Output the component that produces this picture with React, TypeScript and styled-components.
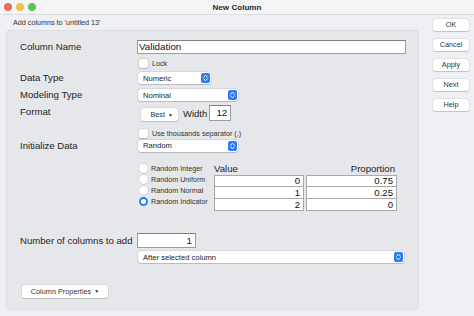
import React from "react";
import styled, { createGlobalStyle } from "styled-components";

const GlobalStyle = createGlobalStyle`
  html, body {
    margin: 0;
    padding: 0;
    background: #eef0f3;
    font-family: "Liberation Sans", Arial, sans-serif;
    color: #1e1e1e;
  }
`;

const Window = styled.div`
  width: 474px;
  height: 316px;
  display: flex;
  flex-direction: column;
  background: #eef0f3;
  overflow: hidden;
`;

const TitleBar = styled.div`
  height: 14px;
  display: flex;
  align-items: center;
  position: relative;
  background: #f3f4f6;
  border-bottom: 1px solid #dcdde0;
`;

const Lights = styled.div`
  display: flex;
  gap: 4px;
  padding-left: 4px;
`;

const Light = styled.span<{ $c: string }>`
  width: 8px;
  height: 8px;
  border-radius: 50%;
  background: ${(p) => p.$c};
`;

const Title = styled.div`
  position: absolute;
  left: 0;
  right: 0;
  text-align: center;
  font-size: 8.1px;
  font-weight: bold;
  color: #2a2a2a;
`;

const Body = styled.div`
  flex: 1;
  display: flex;
`;

const Main = styled.div`
  width: 413px;
  margin-left: 6px;
  display: flex;
  flex-direction: column;
`;

const Hint = styled.div`
  height: 15px;
  display: flex;
  align-items: center;
  padding-left: 7px;
  font-size: 7.2px;
  color: #333;
`;

const Panel = styled.div`
  background: #e5e7ea;
  border: 1px solid #dcdee1;
  border-radius: 3px;
  padding: 9px 0 11px 13px;
  display: flex;
  flex-direction: column;
`;

const Row = styled.div<{ $mt?: number; $h: number; $align?: string }>`
  display: flex;
  align-items: ${(p) => p.$align || "center"};
  margin-top: ${(p) => p.$mt || 0}px;
  height: ${(p) => p.$h}px;
`;

const Label = styled.div<{ $w?: number }>`
  width: ${(p) => (p.$w === undefined ? 117 : p.$w)}px;
  font-size: 9.6px;
  line-height: 14px;
  white-space: nowrap;
`;

const Indent = styled.div<{ $w: number }>`
  width: ${(p) => p.$w}px;
  flex: none;
`;

const TextInput = styled.div<{ $w: number; $h: number; $right?: boolean }>`
  width: ${(p) => p.$w}px;
  height: ${(p) => p.$h}px;
  box-sizing: border-box;
  background: #fff;
  border: 1px solid #9c9c9c;
  border-top-color: #7f7f7f;
  font-size: 9.8px;
  line-height: ${(p) => p.$h - 2}px;
  padding: 0 ${(p) => (p.$right ? 3 : 1)}px;
  text-align: ${(p) => (p.$right ? "right" : "left")};
  color: #111;
`;

const Select = styled.div<{ $w: number }>`
  width: ${(p) => p.$w}px;
  height: 12px;
  box-sizing: border-box;
  background: #fff;
  border-radius: 3px;
  box-shadow: 0 0 0 0.5px rgba(0, 0, 0, 0.12), 0 0.5px 1px rgba(0, 0, 0, 0.15);
  display: flex;
  align-items: center;
  justify-content: space-between;
  padding: 0 1px 0 5px;
  margin-left: 1px;
  font-size: 7.6px;
  color: #222;
`;

const Stepper = () => (
  <svg width="9" height="10" viewBox="0 0 9 10">
    <rect x="0" y="0" width="9" height="10" rx="2" fill="#2f7bf5" />
    <path d="M2.7 4 L4.5 2.4 L6.3 4" stroke="#fff" strokeWidth="1" fill="none" strokeLinecap="round" strokeLinejoin="round" />
    <path d="M2.7 6 L4.5 7.6 L6.3 6" stroke="#fff" strokeWidth="1" fill="none" strokeLinecap="round" strokeLinejoin="round" />
  </svg>
);

const Caret = styled.span`
  display: inline-block;
  margin-left: 3px;
  font-size: 5px;
  vertical-align: 1px;
`;

const PopButton = styled.div<{ $w: number; $h: number; $justify?: string; $mt?: number }>`
  width: ${(p) => p.$w}px;
  height: ${(p) => p.$h}px;
  margin-top: ${(p) => p.$mt || 0}px;
  box-sizing: border-box;
  background: #fff;
  border-radius: 2.5px;
  box-shadow: 0 0 0 0.5px rgba(0, 0, 0, 0.1), 0 0.5px 1px rgba(0, 0, 0, 0.15);
  display: flex;
  align-items: center;
  justify-content: ${(p) => p.$justify || "center"};
  padding: 0 5px;
  font-size: 7.3px;
  color: #333;
`;

const Check = styled.span`
  width: 9px;
  height: 9px;
  box-sizing: border-box;
  background: #fff;
  border-radius: 2px;
  box-shadow: 0 0 0 0.5px rgba(0, 0, 0, 0.15), 0 0.5px 1px rgba(0, 0, 0, 0.15);
  margin: 0 4px 0 2px;
  flex: none;
`;

const SmallText = styled.span`
  font-size: 7.2px;
  color: #333;
  white-space: nowrap;
`;

const WidthText = styled.span`
  font-size: 9.5px;
  line-height: 17px;
  margin: 0 2px 0 5px;
`;

const RandomBlock = styled.div`
  display: flex;
  height: 50px;
  margin-top: 11px;
`;

const Radios = styled.div`
  width: 77px;
  padding-left: 2px;
  box-sizing: border-box;
  display: flex;
  flex-direction: column;
`;

const RadioRow = styled.div`
  height: 11px;
  display: flex;
  align-items: center;
`;

const Radio = styled.span<{ $on?: boolean }>`
  width: 9px;
  height: 9px;
  border-radius: 50%;
  box-sizing: border-box;
  flex: none;
  margin-right: 3px;
  background: #fff;
  border: ${(p) => (p.$on ? "2.5px solid #2f7bf5" : "none")};
  box-shadow: ${(p) => (p.$on ? "none" : "0 0 0 0.5px rgba(0,0,0,0.1), 0 0.5px 1px rgba(0,0,0,0.12)")};
`;

const Table = styled.div`
  display: grid;
  grid-template-columns: 90px 91px;
  column-gap: 2px;
  grid-template-rows: 12px repeat(3, 12px);
`;

const Head = styled.div<{ $right?: boolean }>`
  font-size: 9.6px;
  line-height: 12px;
  text-align: ${(p) => (p.$right ? "right" : "left")};
  padding-right: ${(p) => (p.$right ? 2 : 0)}px;
`;

const Cell = styled.div`
  background: #fff;
  border: 1px solid #a8a8a8;
  border-top: none;
  box-sizing: border-box;
  font-size: 9.6px;
  line-height: 11px;
  text-align: right;
  padding-right: 3px;
  color: #111;
  &:nth-child(3),
  &:nth-child(4) {
    border-top: 1px solid #a8a8a8;
    line-height: 10px;
  }
`;

const Side = styled.div`
  margin-left: 14px;
  padding-top: 4px;
  display: flex;
  flex-direction: column;
  gap: 8px;
`;

const SideButton = styled.div`
  width: 36px;
  height: 12px;
  background: #fff;
  border-radius: 2.5px;
  box-shadow: 0 0 0 0.5px rgba(0, 0, 0, 0.1), 0 0.5px 1px rgba(0, 0, 0, 0.15);
  font-size: 7.3px;
  line-height: 12px;
  text-align: center;
  color: #333;
`;

const tableData = [
  ["0", "0.75"],
  ["1", "0.25"],
  ["2", "0"],
];

const radios = ["Random Integer", "Random Uniform", "Random Normal", "Random Indicator"];

export default function App() {
  return (
    <Window>
      <GlobalStyle />
      <TitleBar>
        <Lights>
          <Light $c="#ee6a5f" />
          <Light $c="#f5bf4f" />
          <Light $c="#61c554" />
        </Lights>
        <Title>New Column</Title>
      </TitleBar>
      <Body>
        <Main>
          <Hint>Add columns to 'untitled 13'</Hint>
          <Panel>
            <Row $h={14}>
              <Label>Column Name</Label>
              <TextInput $w={269} $h={14}>Validation</TextInput>
            </Row>
            <Row $mt={4} $h={11}>
              <Indent $w={117} />
              <Check />
              <SmallText>Lock</SmallText>
            </Row>
            <Row $mt={3} $h={12}>
              <Label>Data Type</Label>
              <Select $w={73}>
                Numeric
                <Stepper />
              </Select>
            </Row>
            <Row $mt={5} $h={12}>
              <Label>Modeling Type</Label>
              <Select $w={100}>
                Nominal
                <Stepper />
              </Select>
            </Row>
            <Row $mt={4} $h={17} $align="flex-start">
              <Label>Format</Label>
              <Indent $w={4} />
              <PopButton $w={37} $h={13} $justify="flex-end" $mt={3}>
                Best<Caret>▼</Caret>
              </PopButton>
              <WidthText>Width</WidthText>
              <TextInput $w={22} $h={16} $right>
                12
              </TextInput>
            </Row>
            <Row $mt={6} $h={10}>
              <Indent $w={117} />
              <Check />
              <SmallText>Use thousands separator (,)</SmallText>
            </Row>
            <Row $mt={1} $h={13}>
              <Label>Initialize Data</Label>
              <Select $w={100}>
                Random
                <Stepper />
              </Select>
            </Row>
            <RandomBlock>
              <Indent $w={117} />
              <Radios>
                {radios.map((r, i) => (
                  <RadioRow key={r}>
                    <Radio $on={i === 3} />
                    <SmallText>{r}</SmallText>
                  </RadioRow>
                ))}
              </Radios>
              <Table>
                <Head>Value</Head>
                <Head $right>Proportion</Head>
                {tableData.flat().map((v, i) => (
                  <Cell key={i}>{v}</Cell>
                ))}
              </Table>
            </RandomBlock>
            <Row $mt={20} $h={15}>
              <Label>Number of columns to add</Label>
              <TextInput $w={59} $h={15} $right>
                1
              </TextInput>
            </Row>
            <Row $mt={3} $h={12}>
              <Indent $w={117} />
              <Select $w={266}>
                After selected column
                <Stepper />
              </Select>
            </Row>
            <Row $mt={21} $h={14}>
              <Indent $w={2} />
              <PopButton $w={86} $h={13}>
                Column Properties<Caret>▼</Caret>
              </PopButton>
            </Row>
          </Panel>
        </Main>
        <Side>
          <SideButton>OK</SideButton>
          <SideButton>Cancel</SideButton>
          <SideButton>Apply</SideButton>
          <SideButton>Next</SideButton>
          <SideButton>Help</SideButton>
        </Side>
      </Body>
    </Window>
  );
}
